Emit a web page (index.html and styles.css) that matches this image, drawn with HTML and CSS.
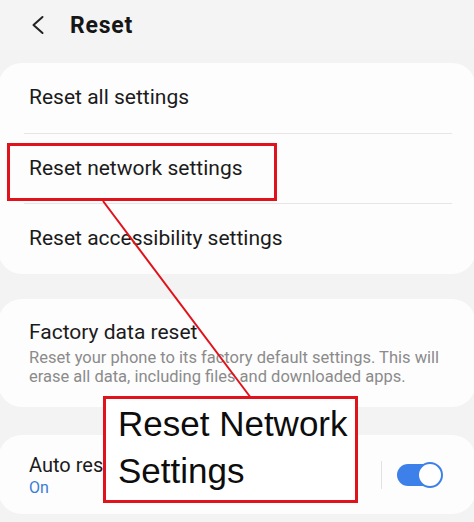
FILE: index.html
```html
<!DOCTYPE html>
<html lang="en">
<head>
<meta charset="utf-8">
<title>Reset</title>
<link rel="stylesheet" href="styles.css">
</head>
<body>
<div class="screen">
  <header class="topbar">
    <svg class="back" width="14" height="20" viewBox="0 0 14 20" aria-hidden="true">
      <polyline points="11.5,2 2.5,10 11.5,18" fill="none" stroke="#222" stroke-width="2" stroke-linecap="round" stroke-linejoin="round"/>
    </svg>
    <h1 class="title">Reset</h1>
  </header>

  <section class="card list">
    <div class="row">Reset all settings</div>
    <div class="sep"></div>
    <div class="row">Reset network settings</div>
    <div class="sep"></div>
    <div class="row">Reset accessibility settings</div>
  </section>

  <section class="card factory">
    <div class="item-title">Factory data reset</div>
    <div class="item-sub">Reset your phone to its factory default settings. This will erase all data, including files and downloaded apps.</div>
  </section>

  <section class="card auto">
    <div class="auto-text">
      <div class="auto-title">Auto restart</div>
      <div class="auto-state">On</div>
    </div>
    <div class="vdiv"></div>
    <div class="toggle"><div class="knob"></div></div>
  </section>

  <div class="hl-box"></div>
  <svg class="pointer" width="474" height="522" viewBox="0 0 474 522" aria-hidden="true">
    <line x1="103" y1="201" x2="251" y2="398" stroke="#e0121b" stroke-width="2"/>
  </svg>
  <div class="callout">Reset Network<br>Settings</div>
</div>
</body>
</html>
```

FILE: styles.css
```css
* { box-sizing: border-box; }
html, body { margin: 0; padding: 0; }
body {
  width: 474px;
  height: 522px;
  overflow: hidden;
  background: #f3f3f3;
  font-family: Roboto, "Noto Sans", sans-serif;
  color: #1b1b1b;
}
.screen {
  position: relative;
  width: 474px;
  height: 522px;
  display: flex;
  flex-direction: column;
}
.topbar {
  height: 50px;
  display: flex;
  align-items: center;
  padding-left: 31px;
  background: #f4f4f4;
}
.back { display: block; }
.title {
  margin: 0 0 0 25px;
  font-size: 23px;
  line-height: 27px;
  font-weight: 700;
  letter-spacing: 0.8px;
  color: #161616;
}
.card {
  background: #fdfdfd;
  border-radius: 24px;
  margin-left: -2px;
  margin-right: -2px;
}
.list { margin-top: 13px; }
.row {
  height: 69.5px;
  display: flex;
  align-items: center;
  padding-left: 31px;
  font-size: 21px;
  line-height: 25px;
}
.sep {
  height: 1px;
  background: #e6e6e6;
  margin: 0 24px 0 26px;
}
.factory {
  margin-top: 25px;
  padding: 21px 30px 21px 31px;
}
.item-title {
  font-size: 21px;
  line-height: 25px;
}
.item-sub {
  margin-top: 3px;
  font-size: 16.5px;
  line-height: 19px;
  color: #8b8b8b;
}
.auto {
  margin-top: 28px;
  display: flex;
  align-items: center;
  padding: 18px 33px 16px 31px;
}
.auto-text { flex: 1; }
.auto-title {
  font-size: 20px;
  line-height: 24px;
}
.auto-state {
  margin-top: 1.5px;
  font-size: 16px;
  line-height: 20px;
  color: #3a7bd8;
}
.vdiv {
  width: 1px;
  height: 28px;
  background: #e2e2e2;
  margin-right: 15px;
}
.toggle {
  position: relative;
  width: 46px;
  height: 26px;
}
.toggle::before {
  content: "";
  position: absolute;
  left: 0;
  top: 2px;
  width: 40px;
  height: 22px;
  border-radius: 11px;
  background: #3d80ea;
}
.knob {
  position: absolute;
  right: 0;
  top: 0;
  width: 26px;
  height: 26px;
  border-radius: 50%;
  background: #ffffff;
  border: 2px solid #3d80ea;
}
.hl-box {
  position: absolute;
  left: 7px;
  top: 143px;
  width: 270px;
  height: 58px;
  border: 3px solid #e0121b;
}
.pointer {
  position: absolute;
  left: 0;
  top: 0;
}
.callout {
  position: absolute;
  left: 103px;
  top: 396px;
  width: 255px;
  height: 107px;
  border: 3px solid #e0121b;
  background: #ffffff;
  padding: 1px 0 0 12px;
  font-family: "Liberation Sans", Arial, sans-serif;
  font-size: 35px;
  line-height: 47px;
  color: #0d0d0d;
}
```
